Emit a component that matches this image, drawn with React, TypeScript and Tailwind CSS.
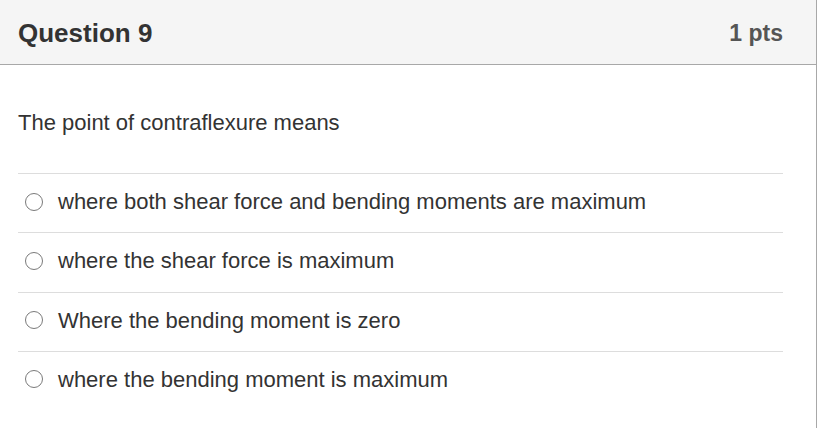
const options = [
  "where both shear force and bending moments are maximum",
  "where the shear force is maximum",
  "Where the bending moment is zero",
  "where the bending moment is maximum",
];

export default function App() {
  return (
    <main className="w-[820px] h-[428px] bg-white font-['Liberation_Sans',Arial,sans-serif] overflow-hidden">
      <div className="w-[817px] h-full border-r border-[#a8a8a8]">
        <header className="h-[65px] bg-[#f5f5f5] border-b border-[#a8a8a8] flex items-center justify-between pl-[18px] pr-[33px]">
          <h2 className="text-[26px] font-bold text-[#333] leading-none pt-[1px]">Question 9</h2>
          <span className="text-[23px] font-bold text-[#555] leading-none pt-[2px]">1 pts</span>
        </header>

        <div className="pl-[18px] pr-[33px] pt-[41px]">
          <p className="text-[22px] leading-[33px] text-[#333]">The point of contraflexure means</p>

          <div className="mt-[34px]">
            {options.map((o) => (
              <label
                key={o}
                className="flex items-center border-t border-[#dddddd] pt-[11px] pb-[14.3px] text-[22px] leading-[33px] text-[#333]"
              >
                <span className="block ml-[7px] mr-[15px] w-[18px] h-[18px] min-w-[18px] rounded-full border-[1.7px] border-[#7a7a7a] bg-white" />
                {o}
              </label>
            ))}
          </div>
        </div>
      </div>
    </main>
  );
}
